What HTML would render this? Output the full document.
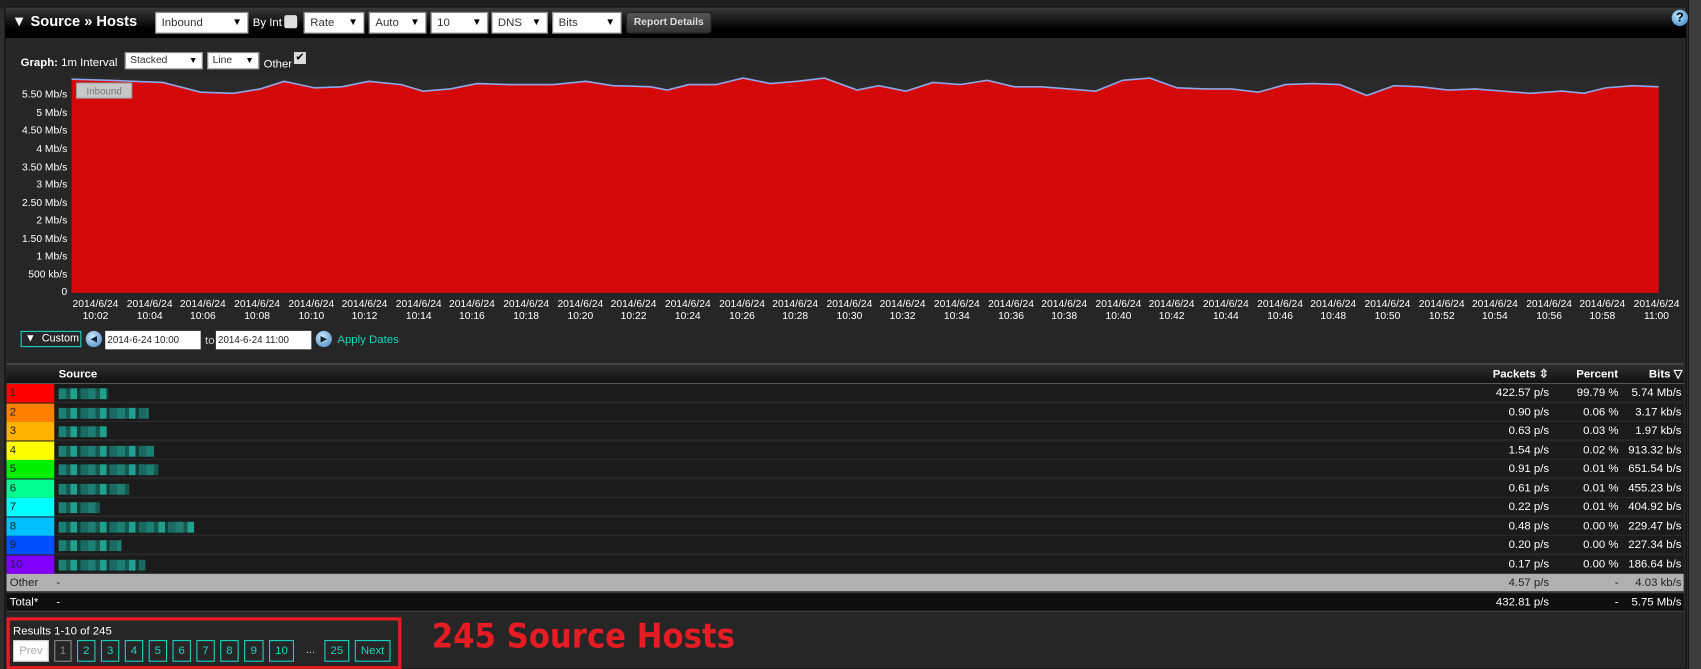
<!DOCTYPE html>
<html><head><meta charset="utf-8"><style>
*{margin:0;padding:0;box-sizing:border-box}
html,body{width:1701px;height:669px;overflow:hidden;background:#2e2e2e}
#w{position:absolute;left:0;top:0;width:1568px;height:617px;transform:scale(1.08482);transform-origin:0 0;font-family:"Liberation Sans",Arial,sans-serif;font-size:10.5px;color:#fff}
.a{position:absolute}
.sel{position:absolute;top:11px;height:20px;background:#fff;color:#333;font-size:10.5px;padding:3px 5px;border:1px solid #888}
.sel:after{content:"▼";position:absolute;right:5px;top:3px;font-size:9px;color:#000}
.sel2{position:absolute;height:16px;background:#fff;color:#333;font-size:9.5px;padding:1px 4px;border:1px solid #888}
.sel2:after{content:"▼";position:absolute;right:4px;top:2px;font-size:8px;color:#000}
.yl{position:absolute;right:1506px;font-size:9.5px;color:#fff;text-align:right;white-space:nowrap}
.xl{position:absolute;top:275px;width:50px;margin-left:-25px;text-align:center;font-size:9.5px;line-height:11px;color:#fff;white-space:nowrap}
.row{position:absolute;left:6px;width:1546px;height:17px;background:#1b1b1b;border-bottom:1px solid #2c2c2c}
.row .c{position:absolute;left:0;top:0;width:44px;height:17px;color:#222;padding:2px 3px;font-size:10.5px}
.row .s{position:absolute;left:48px;top:4px;height:10px;background:repeating-linear-gradient(90deg,#1d7e74 0 7px,#16594f 7px 11px,#22a08f 11px 17px,#0f3f3b 17px 20px,#1a6a62 20px 27px)}
.row .p,.row .q,.row .b{position:absolute;top:2px;text-align:right;font-size:10.5px;white-space:nowrap}
.row .p{right:124px}.row .q{right:60px}.row .b{right:2px}
.pg{position:absolute;top:590px;height:20px;border:1px solid #19d4c0;color:#19d4c0;font-size:10.5px;text-align:center;line-height:18px}
</style></head><body><div id="w">
<div class="a" style="left:0;top:0;width:1568px;height:8px;background:#1f1f1f"></div>
<div class="a" style="left:4px;top:6px;width:1551px;height:611px;background:#262626;border:1px solid #111"></div>
<div class="a" style="left:1556px;top:0;width:12px;height:617px;background:#3c3c3c;border-left:1px solid #111"></div>
<div class="a" style="left:5px;top:7px;width:1549px;height:28px;background:linear-gradient(#3a3a3a,#000 70%)"></div>
<div class="a" style="left:11px;top:12px;font-size:13.5px;font-weight:bold">▼ Source » Hosts</div>
<div class="sel" style="left:143px;width:86px">Inbound</div>
<div class="a" style="left:233px;top:15px">By Int</div>
<div class="a" style="left:262px;top:14px;width:12px;height:12px;background:#ddd;border-radius:2px"></div>
<div class="sel" style="left:280px;width:56px">Rate</div>
<div class="sel" style="left:340px;width:53px">Auto</div>
<div class="sel" style="left:397px;width:53px">10</div>
<div class="sel" style="left:453px;width:52px">DNS</div>
<div class="sel" style="left:509px;width:64px">Bits</div>
<div class="a" style="left:577px;top:11px;width:79px;height:20px;background:linear-gradient(#555,#333);border:1px solid #222;border-radius:3px;color:#ddd;font-size:9.5px;font-weight:bold;text-align:center;line-height:18px">Report Details</div>
<div class="a" style="left:1541px;top:9px;width:15px;height:15px;border-radius:50%;background:radial-gradient(circle at 40% 35%,#bfe6ff,#2a7fc8);color:#000;font-weight:bold;font-size:12px;text-align:center;line-height:15px">?</div>

<div class="a" style="left:19px;top:52px"><b>Graph:</b> 1m Interval</div>
<div class="sel2" style="left:115px;top:48px;width:72px">Stacked</div>
<div class="sel2" style="left:191px;top:48px;width:48px">Line</div>
<div class="a" style="left:243px;top:53px">Other</div>
<div class="a" style="left:271px;top:48px;width:11px;height:11px;background:#ddd;color:#000;font-size:10px;line-height:11px;text-align:center">✔</div>

<svg class="a" style="left:0;top:0" width="1568" height="300">
<rect x="66" y="70" width="1463" height="200" fill="#2a2a2a"/>
<polygon fill="#d40808" points="66,270 66,73 100,74 150,76 185,85 215,86 240,82 262,75 290,81 315,80 340,75 370,78 390,84 415,82 440,77 470,78 510,78 540,75 565,79 600,80 615,83 635,78 660,78 685,72 710,77 735,75 760,72 790,83 810,79 835,84 860,76 885,78 910,74 935,80 960,80 985,82 1010,84 1035,74 1060,72 1085,81 1110,82 1135,82 1160,85 1185,78 1210,77 1235,78 1260,88 1285,79 1310,80 1335,83 1360,82 1385,84 1410,86 1440,84 1460,86 1480,81 1505,79 1529,80 1529,270"/>
<polyline fill="none" stroke="#8fa6e8" stroke-width="1.5" points="66,73 100,74 150,76 185,85 215,86 240,82 262,75 290,81 315,80 340,75 370,78 390,84 415,82 440,77 470,78 510,78 540,75 565,79 600,80 615,83 635,78 660,78 685,72 710,77 735,75 760,72 790,83 810,79 835,84 860,76 885,78 910,74 935,80 960,80 985,82 1010,84 1035,74 1060,72 1085,81 1110,82 1135,82 1160,85 1185,78 1210,77 1235,78 1260,88 1285,79 1310,80 1335,83 1360,82 1385,84 1410,86 1440,84 1460,86 1480,81 1505,79 1529,80"/>
<rect x="70.5" y="76.5" width="51" height="14" fill="#c8c8c8" stroke="#999"/>
<text x="96" y="87" font-size="9" fill="#777" text-anchor="middle" font-family="Liberation Sans">Inbound</text>
</svg>
<div class="yl" style="top:82px">5.50 Mb/s</div>
<div class="yl" style="top:99px">5 Mb/s</div>
<div class="yl" style="top:115px">4.50 Mb/s</div>
<div class="yl" style="top:132px">4 Mb/s</div>
<div class="yl" style="top:149px">3.50 Mb/s</div>
<div class="yl" style="top:165px">3 Mb/s</div>
<div class="yl" style="top:182px">2.50 Mb/s</div>
<div class="yl" style="top:198px">2 Mb/s</div>
<div class="yl" style="top:215px">1.50 Mb/s</div>
<div class="yl" style="top:231px">1 Mb/s</div>
<div class="yl" style="top:248px">500 kb/s</div>
<div class="yl" style="top:264px">0</div>
<div class="xl" style="left:88px">2014/6/24<br>10:02</div><div class="xl" style="left:138px">2014/6/24<br>10:04</div><div class="xl" style="left:187px">2014/6/24<br>10:06</div><div class="xl" style="left:237px">2014/6/24<br>10:08</div><div class="xl" style="left:287px">2014/6/24<br>10:10</div><div class="xl" style="left:336px">2014/6/24<br>10:12</div><div class="xl" style="left:386px">2014/6/24<br>10:14</div><div class="xl" style="left:435px">2014/6/24<br>10:16</div><div class="xl" style="left:485px">2014/6/24<br>10:18</div><div class="xl" style="left:535px">2014/6/24<br>10:20</div><div class="xl" style="left:584px">2014/6/24<br>10:22</div><div class="xl" style="left:634px">2014/6/24<br>10:24</div><div class="xl" style="left:684px">2014/6/24<br>10:26</div><div class="xl" style="left:733px">2014/6/24<br>10:28</div><div class="xl" style="left:783px">2014/6/24<br>10:30</div><div class="xl" style="left:832px">2014/6/24<br>10:32</div><div class="xl" style="left:882px">2014/6/24<br>10:34</div><div class="xl" style="left:932px">2014/6/24<br>10:36</div><div class="xl" style="left:981px">2014/6/24<br>10:38</div><div class="xl" style="left:1031px">2014/6/24<br>10:40</div><div class="xl" style="left:1080px">2014/6/24<br>10:42</div><div class="xl" style="left:1130px">2014/6/24<br>10:44</div><div class="xl" style="left:1180px">2014/6/24<br>10:46</div><div class="xl" style="left:1229px">2014/6/24<br>10:48</div><div class="xl" style="left:1279px">2014/6/24<br>10:50</div><div class="xl" style="left:1329px">2014/6/24<br>10:52</div><div class="xl" style="left:1378px">2014/6/24<br>10:54</div><div class="xl" style="left:1428px">2014/6/24<br>10:56</div><div class="xl" style="left:1477px">2014/6/24<br>10:58</div><div class="xl" style="left:1527px">2014/6/24<br>11:00</div>

<div class="a" style="left:19px;top:305px;width:56px;height:15px;border:1px solid #19d4c0;font-size:10px;line-height:13px;padding-left:3px;white-space:nowrap">▼ &nbsp;Custom</div>
<div class="a" style="left:79px;top:305px;width:15px;height:15px;border-radius:50%;background:radial-gradient(circle at 40% 35%,#cfe8ff,#3a7fc0);color:#123;font-size:8px;line-height:15px;text-align:center">◀</div>
<div class="a" style="left:97px;top:305px;width:88px;height:17px;background:#fff;color:#222;font-size:9px;padding:3px 2px;white-space:nowrap">2014-6-24 10:00</div>
<div class="a" style="left:189px;top:308px;color:#ccc">to</div>
<div class="a" style="left:199px;top:305px;width:88px;height:17px;background:#fff;color:#222;font-size:9px;padding:3px 2px;white-space:nowrap">2014-6-24 11:00</div>
<div class="a" style="left:291px;top:305px;width:15px;height:15px;border-radius:50%;background:radial-gradient(circle at 40% 35%,#cfe8ff,#3a7fc0);color:#123;font-size:8px;line-height:15px;text-align:center">▶</div>
<div class="a" style="left:311px;top:307px;color:#19d4c0">Apply Dates</div>

<div class="a" style="left:6px;top:335px;width:1546px;height:19px;background:linear-gradient(#2e2e2e,#111);border-top:1px solid #555;border-bottom:1px solid #555"></div>
<div class="a" style="left:54px;top:339px;font-weight:bold">Source</div>
<div class="a" style="left:1376px;top:339px;font-weight:bold">Packets ⇳</div>
<div class="a" style="left:1453px;top:339px;font-weight:bold">Percent</div>
<div class="a" style="left:1520px;top:339px;font-weight:bold">Bits ▽</div>

<div class="row" style="top:354px"><div class="c" style="background:#ff0000">1</div><div class="s" style="width:46px"></div><div class="p">422.57 p/s</div><div class="q">99.79 %</div><div class="b">5.74 Mb/s</div></div>
<div class="row" style="top:371.5px"><div class="c" style="background:#ff8000">2</div><div class="s" style="width:83px"></div><div class="p">0.90 p/s</div><div class="q">0.06 %</div><div class="b">3.17 kb/s</div></div>
<div class="row" style="top:389px"><div class="c" style="background:#ffb300">3</div><div class="s" style="width:45px"></div><div class="p">0.63 p/s</div><div class="q">0.03 %</div><div class="b">1.97 kb/s</div></div>
<div class="row" style="top:406.5px"><div class="c" style="background:#ffff00">4</div><div class="s" style="width:88px"></div><div class="p">1.54 p/s</div><div class="q">0.02 %</div><div class="b">913.32 b/s</div></div>
<div class="row" style="top:424px"><div class="c" style="background:#00f000">5</div><div class="s" style="width:92px"></div><div class="p">0.91 p/s</div><div class="q">0.01 %</div><div class="b">651.54 b/s</div></div>
<div class="row" style="top:441.5px"><div class="c" style="background:#00ff90">6</div><div class="s" style="width:65px"></div><div class="p">0.61 p/s</div><div class="q">0.01 %</div><div class="b">455.23 b/s</div></div>
<div class="row" style="top:459px"><div class="c" style="background:#00ffff">7</div><div class="s" style="width:38px"></div><div class="p">0.22 p/s</div><div class="q">0.01 %</div><div class="b">404.92 b/s</div></div>
<div class="row" style="top:476.5px"><div class="c" style="background:#00c0ff">8</div><div class="s" style="width:125px"></div><div class="p">0.48 p/s</div><div class="q">0.00 %</div><div class="b">229.47 b/s</div></div>
<div class="row" style="top:494px"><div class="c" style="background:#0050ff">9</div><div class="s" style="width:58px"></div><div class="p">0.20 p/s</div><div class="q">0.00 %</div><div class="b">227.34 b/s</div></div>
<div class="row" style="top:511.5px"><div class="c" style="background:#8000ff">10</div><div class="s" style="width:80px"></div><div class="p">0.17 p/s</div><div class="q">0.00 %</div><div class="b">186.64 b/s</div></div>
<div class="row" style="top:529px;background:#b0b0b0;color:#222"><div class="c">Other</div><div class="a" style="left:46px;top:2px">-</div><div class="p">4.57 p/s</div><div class="q">-</div><div class="b">4.03 kb/s</div></div>
<div class="row" style="top:547px;background:#0e0e0e;border-bottom:1px solid #444"><div class="c" style="color:#fff">Total*</div><div class="a" style="left:46px;top:2px">-</div><div class="p">432.81 p/s</div><div class="q">-</div><div class="b">5.75 Mb/s</div></div>

<div class="a" style="left:6px;top:569px;width:364px;height:48px;border:3px solid #e51c23"></div>
<div class="a" style="left:12px;top:576px">Results 1-10 of 245</div>
<div class="pg" style="left:12px;width:33px;background:#fff;color:#aaa;border-color:#ccc">Prev</div>
<div class="pg" style="left:50px;width:16px;color:#888;border-color:#888">1</div>
<div class="pg" style="left:71px;width:17px">2</div>
<div class="pg" style="left:93px;width:17px">3</div>
<div class="pg" style="left:115px;width:17px">4</div>
<div class="pg" style="left:137px;width:17px">5</div>
<div class="pg" style="left:159px;width:17px">6</div>
<div class="pg" style="left:181px;width:17px">7</div>
<div class="pg" style="left:203px;width:17px">8</div>
<div class="pg" style="left:225px;width:18px">9</div>
<div class="pg" style="left:248px;width:23px">10</div>
<div class="a" style="left:282px;top:594px;font-size:10px;color:#ccc">...</div>
<div class="pg" style="left:299px;width:23px">25</div>
<div class="pg" style="left:327px;width:33px">Next</div>
<div class="a" style="left:398px;top:569px;font-size:31.5px;font-weight:bold;color:#e51c23;font-family:'DejaVu Sans Condensed','Liberation Sans',sans-serif;white-space:nowrap">245 Source Hosts</div>
</div></body></html>
